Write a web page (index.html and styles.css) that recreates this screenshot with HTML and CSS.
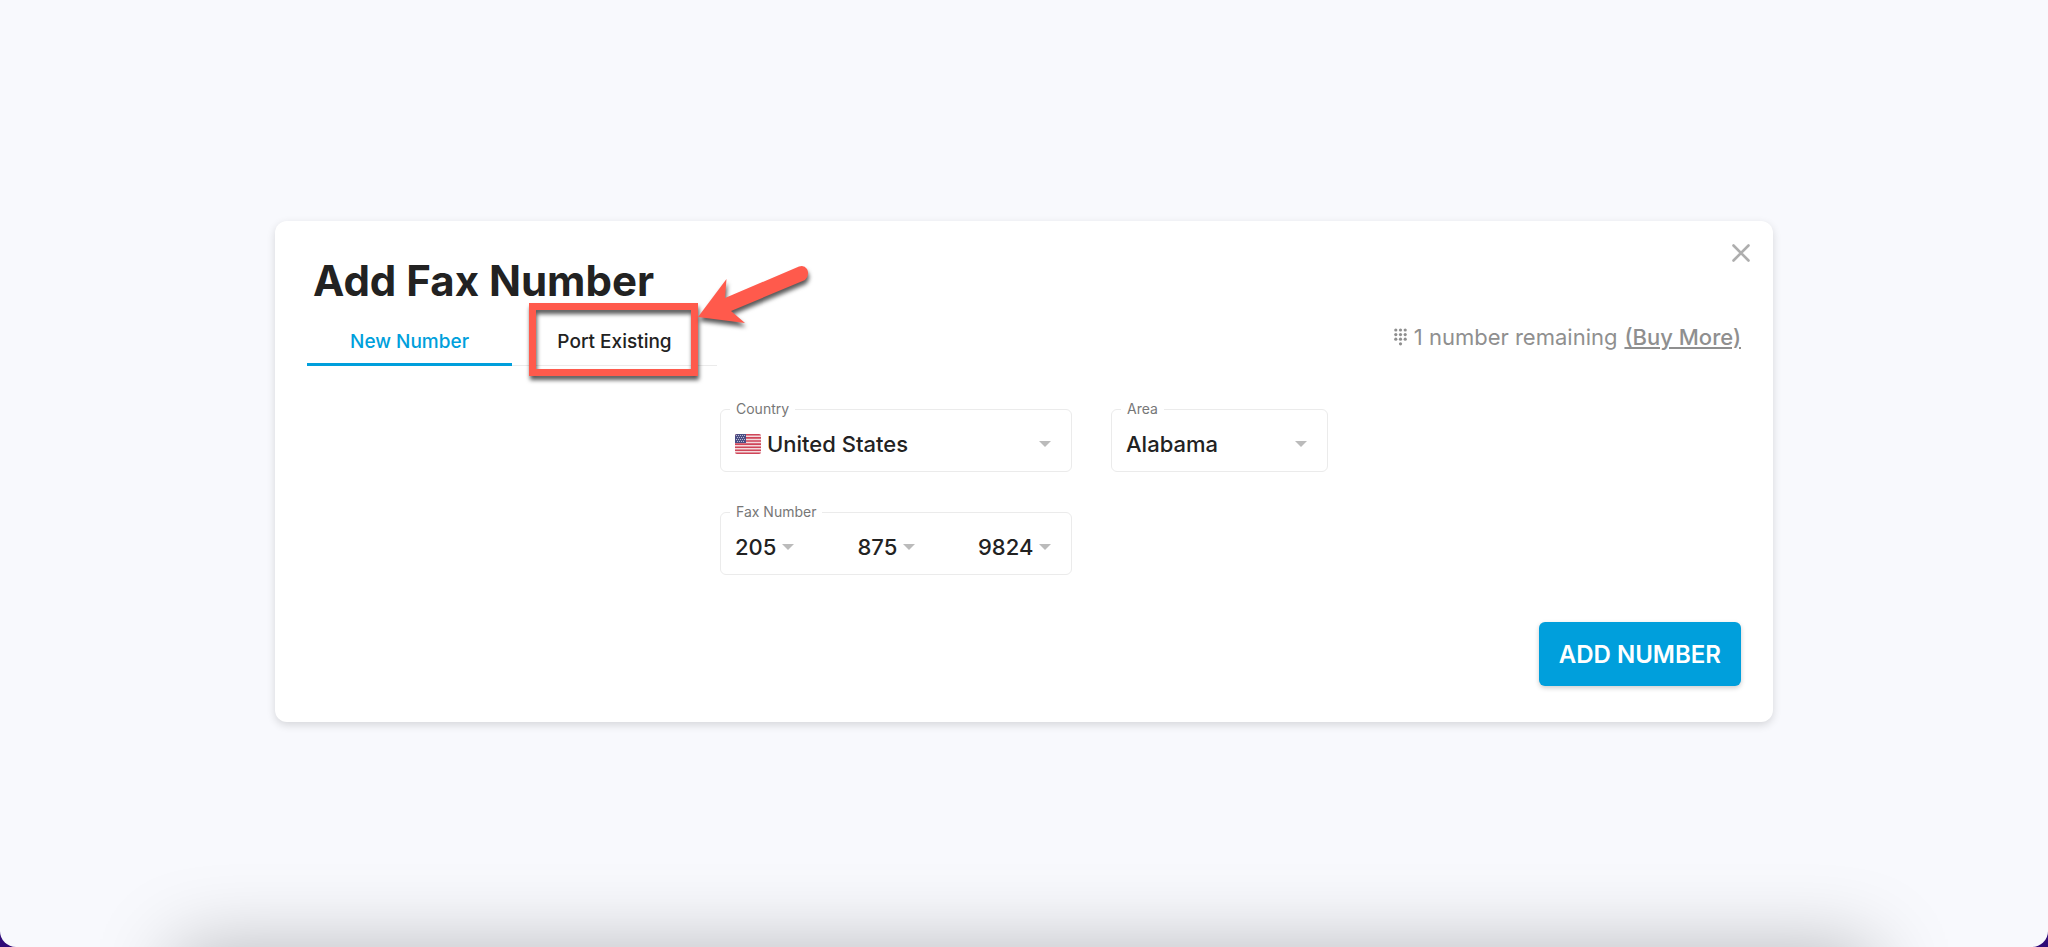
FILE: index.html
```html
<!DOCTYPE html>
<html lang="en">
<head>
  <meta charset="UTF-8" />
  <meta name="viewport" content="width=device-width, initial-scale=1.0" />
  <title>Add Fax Number</title>
  <link rel="stylesheet" href="styles.css">
</head>
<body>
  <main class="page">
    <form class="card">
      <button type="button" class="close" aria-label="Close">
        <svg width="18" height="18" viewBox="0 0 18 18"><path d="M1.5 1.5L16.5 16.5M16.5 1.5L1.5 16.5" fill="none" stroke="#aeaeae" stroke-width="2.6" stroke-linecap="round"/></svg>
      </button>

      <h1>Add Fax Number</h1>

      <div class="toolbar">
        <nav class="tabs">
          <button type="button" class="tab active">New Number</button>
          <button type="button" class="tab">
            Port Existing
            <span class="highlight"></span>
            <svg class="arrow" width="120" height="64" viewBox="0 0 120 64"><path d="M4 54L32.5 16L31 35L105 3.500Q110 1.500 113 6Q116 12 111 17L37 48L51 60Z" fill="#ff5a4c"/></svg>
          </button>
        </nav>
        <p class="remaining">
          <svg width="13" height="18" viewBox="0 0 13 18" fill="#8f8f8f">
            <circle cx="1.8" cy="2" r="1.6"/><circle cx="6.5" cy="2" r="1.6"/><circle cx="11.2" cy="2" r="1.6"/>
            <circle cx="1.8" cy="6.6" r="1.6"/><circle cx="6.5" cy="6.6" r="1.6"/><circle cx="11.2" cy="6.6" r="1.6"/>
            <circle cx="1.8" cy="11.2" r="1.6"/><circle cx="6.5" cy="11.2" r="1.6"/><circle cx="11.2" cy="11.2" r="1.6"/>
            <circle cx="6.5" cy="15.8" r="1.6"/>
          </svg>
          <span>1 number remaining</span>
          <a href="#">(Buy More)</a>
        </p>
      </div>

      <div class="fields">
        <fieldset>
          <legend><label for="country">Country</label></legend>
          <div class="field-row">
            <svg class="flag" width="26" height="20" viewBox="0 0 26 20">
              <defs><clipPath id="flagClip"><rect width="26" height="20" rx="2"/></clipPath></defs>
              <g clip-path="url(#flagClip)">
                <rect width="26" height="20" fill="#f3dadd"/>
                <path d="M0 .8H26M0 3.9H26M0 7H26M0 10.1H26M0 13.2H26M0 16.3H26M0 19.3H26" stroke="#cf4659" stroke-width="1.6"/>
                <rect width="11" height="9" fill="#4b4d84"/>
                <path d="M1 1.5H10M2 3.5H10M1 5.5H10M2 7.5H10" stroke="#b9bad2" stroke-width="1" stroke-dasharray="1 1"/>
              </g>
            </svg>
            <span class="select wide">
              <select id="country"><option>United States</option></select>
            </span>
          </div>
        </fieldset>

        <fieldset>
          <legend><label for="area">Area</label></legend>
          <div class="field-row">
            <span class="select wide">
              <select id="area"><option>Alabama</option></select>
            </span>
          </div>
        </fieldset>

        <fieldset>
          <legend>Fax Number</legend>
          <div class="field-row numbers">
            <span class="select"><select aria-label="Area code"><option>205</option></select></span>
            <span class="select"><select aria-label="Prefix"><option>875</option></select></span>
            <span class="select"><select aria-label="Line number"><option>9824</option></select></span>
          </div>
        </fieldset>
      </div>

      <div class="actions">
        <button type="submit" class="submit">ADD NUMBER</button>
      </div>
    </form>
    <div class="bottom-shadow"></div>
  </main>
</body>
</html>
```
FILE: styles.css
```css
:root {
  --bg: #f8f9fd;
  --text: #222;
  --muted: #8f8f8f;
  --line: #ebebeb;
  --blue: #009fdc;
  --mark: #ff5a4c;
}

* {
  box-sizing: border-box;
}

body {
  margin: 0;
  background: #2f0b78;
  color: var(--text);
  font-family: Inter, "Open Sans", sans-serif;
}

button,
select {
  font-family: inherit;
  color: inherit;
  border: none;
  background: transparent;
  padding: 0;
  cursor: pointer;
}

.page {
  position: relative;
  min-height: 100vh;
  padding: 221px 275px 120px;
  background: var(--bg);
  border-radius: 0 0 16px 16px;
  overflow: hidden;
}

.card {
  position: relative;
  padding: 36px 32px;
  background: #fff;
  border-radius: 12px;
  box-shadow: 0 3px 8px rgba(0, 0, 0, 0.14);
}

.close {
  position: absolute;
  top: 23px;
  right: 23px;
  display: flex;
}

h1 {
  margin: 0 0 12px 6px;
  font-size: 42px;
  line-height: 48px;
  font-weight: 700;
}

.toolbar {
  display: flex;
  justify-content: space-between;
}

.tabs {
  display: flex;
}

.tab {
  position: relative;
  width: 205px;
  height: 49px;
  font-size: 19px;
  font-weight: 500;
  border-bottom: 1px solid var(--line);
}

.tab.active {
  padding-top: 2px;
  color: var(--blue);
  border-bottom: 3px solid var(--blue);
}

.highlight {
  position: absolute;
  top: -14px;
  left: 17px;
  width: 169px;
  height: 73px;
  border: 7px solid var(--mark);
  filter: drop-shadow(1px 4px 2px rgba(0, 0, 0, 0.65));
}

.arrow {
  position: absolute;
  top: -54px;
  left: 182px;
  overflow: visible;
  filter: drop-shadow(1px 4px 2px rgba(0, 0, 0, 0.65));
}

.remaining {
  display: flex;
  align-items: center;
  gap: 7px;
  height: 40px;
  margin: 0;
  font-size: 22px;
  color: var(--muted);
}

.remaining a {
  color: inherit;
  font-weight: 500;
}

.fields {
  display: grid;
  grid-template-columns: 352px 217px;
  justify-content: center;
  gap: 32px 39px;
  margin-top: 35px;
}

fieldset {
  min-width: 0;
  height: 71px;
  margin: 0;
  padding: 0 20px 0 9px;
  border: 1px solid var(--line);
  border-radius: 6px;
}

legend {
  padding: 0 6px;
  font-size: 14px;
  line-height: 16px;
  color: #777;
}

.field-row {
  display: flex;
  align-items: center;
  gap: 6px;
  height: 54px;
  padding-left: 5px;
}

.flag {
  flex: none;
}

.select {
  display: grid;
  align-items: center;
}

.select.wide {
  flex: 1;
}

.select select {
  grid-area: 1 / 1;
  appearance: none;
  padding-right: 17px;
  font-size: 22px;
  line-height: 28px;
  font-weight: 500;
}

.select::after {
  content: "";
  grid-area: 1 / 1;
  justify-self: end;
  border: 6px solid transparent;
  border-top-color: #bbb;
  border-bottom: none;
  pointer-events: none;
}

.numbers {
  justify-content: space-between;
}

.actions {
  display: flex;
  justify-content: flex-end;
  margin-top: 47px;
}

.submit {
  height: 64px;
  padding: 0 20px;
  font-size: 24px;
  font-weight: 600;
  color: #fff;
  background: var(--blue);
  border-radius: 6px;
  box-shadow: 0 2px 5px rgba(0, 0, 0, 0.2);
}

.bottom-shadow {
  position: absolute;
  left: 175px;
  right: 175px;
  bottom: -100px;
  height: 100px;
  box-shadow: 0 0 80px rgba(0, 0, 0, 0.26);
}
```
